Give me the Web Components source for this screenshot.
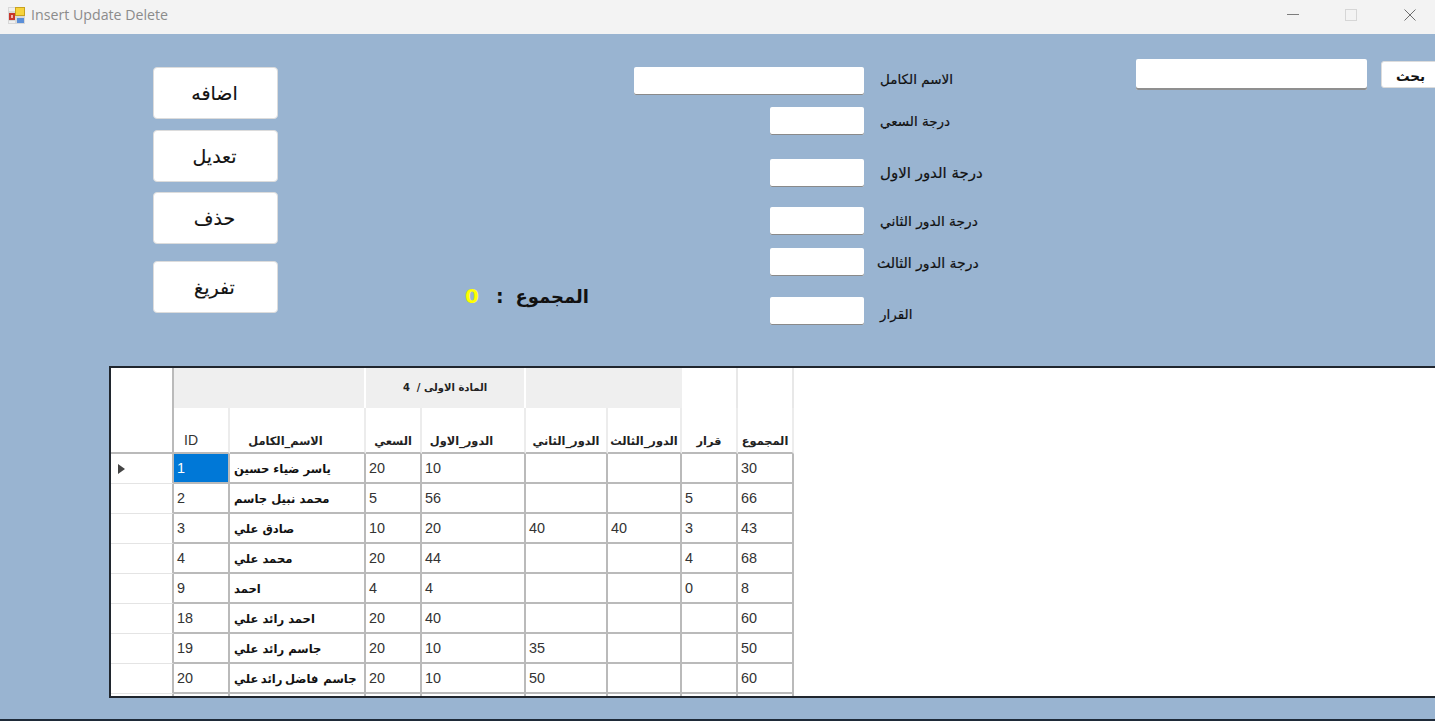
<!DOCTYPE html>
<html lang="ar">
<head>
<meta charset="utf-8">
<title>Insert Update Delete</title>
<style>
html,body{margin:0;padding:0;height:721px;overflow:hidden;background:#99b4d1;font-family:"Liberation Sans","DejaVu Sans",sans-serif}
app-window{width:1435px;height:721px}
</style>
</head>
<body>
<app-window>
  <win-titlebar slot="title">Insert Update Delete</win-titlebar>
  <div slot="buttons">
    <form-button style="margin-top:0">اضافه</form-button>
    <form-button style="margin-top:11px">تعديل</form-button>
    <form-button style="margin-top:10px">حذف</form-button>
    <form-button style="margin-top:17px">تفريغ</form-button>
  </div>
  <total-label slot="total" value="0">المجموع</total-label>
  <div slot="fields">
    <form-field input="230" style="margin-top:0;--ly:-4px">الاسم الكامل</form-field>
    <form-field input="94" style="margin-top:12px">درجة السعي</form-field>
    <form-field input="94" style="margin-top:24px;font-size:15px">درجة الدور الاول</form-field>
    <form-field input="94" style="margin-top:20px;font-size:13.8px">درجة الدور الثاني</form-field>
    <form-field input="94" style="margin-top:13px;font-size:14px;--lx:-3px;--ly:2px">درجة الدور الثالث</form-field>
    <form-field input="94" style="margin-top:21px;--ly:6px">القرار</form-field>
  </div>
  <search-box slot="search">بحث</search-box>
  <data-grid slot="grid"></data-grid>
</app-window>

<script>
function define(name, css, html, extra) {
  class El extends HTMLElement {
    constructor() {
      super();
      const root = this.attachShadow({mode: 'open'});
      root.innerHTML = '<style>' + css + '</style>' + html;
      if (extra) extra(this, root);
    }
    connectedCallback() { if (this.ready) this.ready(this.shadowRoot); }
  }
  customElements.define(name, El);
}

define('app-window', `
  :host{display:flex;flex-direction:column;overflow:hidden;background:#99b4d1}
  .top{display:flex;height:332px;flex:none;overflow:hidden}
  .buttons{width:125px;margin:33px 0 0 153px;flex:none}
  .total{width:124px;margin:248px 0 0 187px;flex:none}
  .fields{width:457px;margin:33px 0 0 45px;flex:none}
  .search{margin:25px 0 0 45px;flex:none;width:299px}
  .grid{margin-left:109px;width:1326px;height:332px;flex:none}
  .foot{flex:none;margin-top:21px;height:2px;background:#1e2a38}
`, `
  <slot name="title"></slot>
  <div class="top">
    <div class="buttons"><slot name="buttons"></slot></div>
    <div class="total"><slot name="total"></slot></div>
    <div class="fields"><slot name="fields"></slot></div>
    <div class="search"><slot name="search"></slot></div>
  </div>
  <div class="grid"><slot name="grid"></slot></div>
  <div class="foot"></div>
`);

define('win-titlebar', `
  :host{display:flex;align-items:center;height:34px;flex:none;background:#f3f3f3;color:#8b8b8b;font:14.2px "Open Sans","Liberation Sans",sans-serif}
  .icon{width:17px;height:17px;margin:0 6px 4px 8px;flex:none}
  .label{flex:1;padding-bottom:6px}
  .ctl{width:12px;height:12px;flex:none;margin-bottom:4px}
  .min{margin-right:46px}
  .max{margin-right:47px}
  .close{margin-right:19px}
`, `
  <svg class="icon" viewBox="0 0 17 17">
    <rect x="0" y="0" width="17" height="17" fill="#d8d8d8"/>
    <rect x="1" y="1" width="6" height="3" fill="#efefef"/>
    <rect x="7" y="0" width="10" height="9" fill="#c9a21e"/>
    <rect x="8" y="1" width="8" height="7" fill="#f7d33c"/>
    <rect x="1" y="6" width="6" height="7" fill="#c8352b"/>
    <rect x="3" y="8" width="2" height="3" fill="#f3b3ad"/>
    <rect x="9" y="11" width="7" height="5" fill="#5b8fd8"/>
    <rect x="1" y="14" width="6" height="2" fill="#f0f0f0"/>
  </svg>
  <span class="label"><slot></slot></span>
  <svg class="ctl min" viewBox="0 0 12 12"><path d="M0 5.5H12" stroke="#7d7d7d" stroke-width="1"/></svg>
  <svg class="ctl max" viewBox="0 0 12 12"><rect x=".5" y=".5" width="11" height="11" fill="none" stroke="#d6d6d6"/></svg>
  <svg class="ctl close" viewBox="0 0 12 12"><path d="M.5 .5L11.5 11.5M11.5 .5L.5 11.5" stroke="#6e6e6e" stroke-width="1" fill="none"/></svg>
`);

define('form-button', `
  :host{display:flex;align-items:center;justify-content:center;box-sizing:border-box;width:125px;height:52px;padding-right:2px;background:#fff;border:1px solid #dcdcdc;border-radius:4px;font:19px "DejaVu Sans",sans-serif;color:#111;direction:rtl;-webkit-text-stroke:.15px #111}
`, `<slot></slot>`);

define('total-label', `
  :host{display:flex;align-items:center;justify-content:space-between;height:28px;font:bold 18px "DejaVu Sans",sans-serif;color:#111}
  .v{color:#ffff00;width:14px;margin-right:17px;text-align:center;font-size:20px}
  .c{margin-right:11px;font-size:19px}
  .n{direction:rtl;flex:1;text-align:right}
`, `<span class="v"></span><span class="c">:</span><span class="n"><slot></slot></span>`,
  (el, root) => { el.ready = r => { r.querySelector('.v').textContent = el.getAttribute('value'); }; });

define('form-field', `
  :host{display:grid;grid-template-columns:230px 1fr;column-gap:16px;align-items:center;height:28px;font:13.5px "DejaVu Sans",sans-serif;color:#111;-webkit-text-stroke:.2px #111}
  .in{justify-self:end;box-sizing:border-box;height:28px;background:#fff;border-radius:2px;box-shadow:inset 0 -1px 0 #8a8a8a}
  .lb{direction:rtl;text-align:right;justify-self:start;white-space:nowrap;margin-left:var(--lx,0);margin-top:var(--ly,0)}
`, `<div class="in"></div><div class="lb"><slot></slot></div>`,
  (el, root) => { el.ready = r => {
    r.querySelector('.in').style.width = el.getAttribute('input') + 'px';
  }; });

define('search-box', `
  :host{display:flex;align-items:flex-start;gap:14px;font:bold 13.5px "DejaVu Sans",sans-serif;color:#111}
  .in{flex:none;width:231px;height:31px;background:#fff;border-radius:2px;box-sizing:border-box;box-shadow:inset 0 -2px 0 #8f8f8f}
  .btn{flex:none;width:70px;height:27px;margin-top:2px;padding:2px 0 0 14px;box-sizing:border-box;background:#fff;border:1px solid #dcdcdc;border-radius:3px;display:flex;align-items:center;direction:ltr}
`, `<div class="in"></div><div class="btn"><span dir="rtl"><slot></slot></span></div>`);

const COLS = [63, 56, 136, 56, 104, 82, 74, 56, 56];
const HEAD = ['ID', 'الاسم_الكامل', 'السعي', 'الدور_الاول', 'الدور_الثاني', 'الدور_الثالث', 'قرار', 'المجموع'];
const ROWS = [
  ['1', 'ياسر ضياء حسين', '20', '10', '', '', '', '30'],
  ['2', 'محمد نبيل جاسم', '5', '56', '', '', '5', '66'],
  ['3', 'صادق علي', '10', '20', '40', '40', '3', '43'],
  ['4', 'محمد علي', '20', '44', '', '', '4', '68'],
  ['9', 'احمد', '4', '4', '', '', '0', '8'],
  ['18', 'احمد رائد علي', '20', '40', '', '', '', '60'],
  ['19', 'جاسم رائد علي', '20', '10', '35', '', '', '50'],
  ['20', 'جاسم  فاضل رائد علي', '20', '10', '50', '', '', '60'],
  ['', '', '', '', '', '', '', '']
];

define('data-grid', `
  :host{display:block;box-sizing:border-box;height:332px;background:#fff;border:2px solid #20262e;border-right:0;overflow:hidden;font:14.4px "Liberation Sans",sans-serif;color:#333}
  .g{display:grid;grid-template-columns:${COLS.map(c => c + 'px').join(' ')};grid-auto-rows:30px;width:max-content}
  .g>div{box-sizing:border-box;overflow:hidden;white-space:nowrap}
  .rh{border-right:2px solid #bababa;border-bottom:1px solid #e4e4e4;display:flex;align-items:center;padding-left:7px}
  .rh svg{width:7px;height:10px}
  .corner{grid-row:span 2;border-right:2px solid #bababa;border-bottom:2px solid #bababa}
  .band{height:40px;background:#efefef;border-right:2px solid #fff;display:flex;align-items:center;justify-content:center;padding-bottom:2px;font:bold 10px "DejaVu Sans",sans-serif;color:#222}
  .bandw{height:40px;background:#fff;border-right:2px solid #e8e8e8}
  .h{height:46px;border-right:2px solid #ececec;border-bottom:2px solid #bababa;display:flex;align-items:flex-end;justify-content:center;padding-bottom:4px;font:bold 11.4px "DejaVu Sans",sans-serif;color:#222}
  .h.id{font:14px "Liberation Sans",sans-serif;color:#333;padding-right:20px}
  .h.s{padding-right:23px}
  .c{border-right:2px solid #bababa;border-bottom:2px solid #bababa;padding-left:3px;display:flex;align-items:center}
  .n{font:bold 11.6px "DejaVu Sans",sans-serif;color:#111;justify-content:flex-start;padding-top:1px;padding-left:4px}
  .n.tight{word-spacing:-1.6px}
  .sel{background:#0078d7;color:#fff}
`, `<div class="g"></div>`,
  (el, root) => {
    const g = root.querySelector('.g');
    g.style.gridTemplateRows = '40px 46px';
    let h = '<div class="corner"></div>';
    h += '<div class="band" style="grid-column:span 2"></div>';
    h += '<div class="band" style="grid-column:span 2"><span dir="rtl">المادة الاولى / &nbsp;4</span></div>';
    h += '<div class="band" style="grid-column:span 2;border-right:0"></div>';
    h += '<div class="bandw"></div><div class="bandw"></div>';
    HEAD.forEach((t, i) => {
      const x = i === 0 ? ' id' : (i === 1 || i === 3 ? ' s' : '');
      h += '<div class="h' + x + '"><span dir="auto">' + t + '</span></div>';
    });
    ROWS.forEach((r, ri) => {
      h += '<div class="rh">' + (ri === 0 ? '<svg viewBox="0 0 7 10"><path d="M0 0L7 5L0 10Z" fill="#444"/></svg>' : '') + '</div>';
      r.forEach((v, i) => {
        const cls = 'c' + (i === 1 ? ' n' : '') + (i === 1 && ri === 7 ? ' tight' : '') + (ri === 0 && i === 0 ? ' sel' : '');
        h += '<div class="' + cls + '"><span dir="auto" style="white-space:pre">' + v + '</span></div>';
      });
    });
    g.innerHTML = h;
  });
</script>
</body>
</html>
